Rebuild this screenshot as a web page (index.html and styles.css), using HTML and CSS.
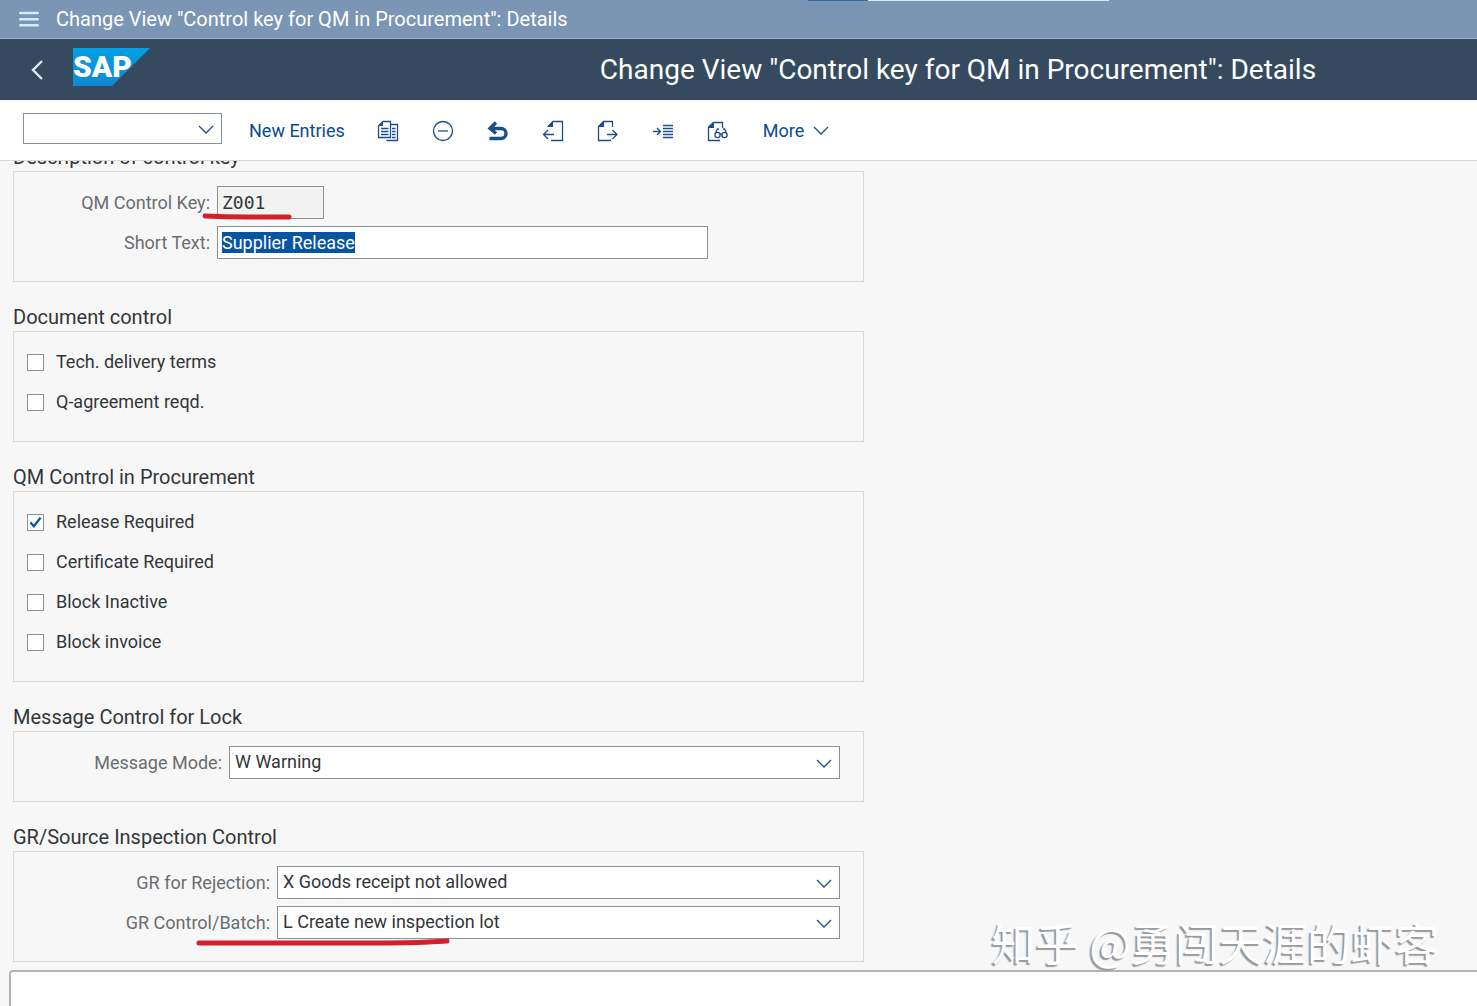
FILE: index.html
```html
<!DOCTYPE html>
<html lang="en">
<head>
    <meta charset="UTF-8">
    <meta name="viewport" content="width=device-width, initial-scale=1.0">
    <title>Change View "Control key for QM in Procurement": Details</title>
    <link rel="stylesheet" href="styles.css">
</head>
<body>
    <div class="menu-bar">
        <button class="menu-button" type="button" aria-label="Menu">
            <svg width="20" height="16" viewBox="0 0 20 16" stroke="#d5eafc" stroke-width="2.6" stroke-linecap="round">
                <path d="M1.3 2h17.4M1.3 8.2h17.4M1.3 14.2h17.4"/>
            </svg>
        </button>
        <span>Change View "Control key for QM in Procurement": Details</span>
        <div class="progress"><div class="progress-value"></div></div>
    </div>

    <header class="shell-header">
        <button class="back-button" type="button" aria-label="Back">
            <svg width="14" height="20" viewBox="0 0 14 20" fill="none" stroke="#d5eafc" stroke-width="2.4">
                <path d="M13 1L4 10l9 9"/>
            </svg>
        </button>
        <svg class="logo" width="77" height="38" viewBox="0 0 77 38">
            <defs>
                <linearGradient id="logo-fill" x1="0" y1="0" x2="0" y2="1">
                    <stop offset="0" stop-color="#009fe3"/>
                    <stop offset="1" stop-color="#1288d4"/>
                </linearGradient>
            </defs>
            <path d="M0 0h77L39 38H0z" fill="url(#logo-fill)"/>
            <text class="logo-text" x="0" y="29">SAP</text>
        </svg>
        <h1>Change View "Control key for QM in Procurement": Details</h1>
    </header>

    <div class="toolbar">
        <div class="select-box command">
            <select aria-label="Command"><option></option></select>
            <svg width="16" height="9" viewBox="0 0 16 9"><path d="M1 1l7 7 7-7"/></svg>
        </div>
        <button class="text-button" type="button">New Entries</button>
        <button class="icon-button" type="button" aria-label="Copy As">
            <svg width="22" height="22" viewBox="0 0 22 22">
                <path d="M6 1.5h7.500v16H1.500V6zM13.500 4.500H20.500v16H9.500M4 8.500h7.500M4 11.500h7.500M4 14.500h7.500M15 8.500h3.500M15 11.500h3.500M15 14.500h3.500M15 17.500h3.500"/>
                <path class="solid" d="M6 1v5H1z"/>
            </svg>
        </button>
        <button class="icon-button" type="button" aria-label="Delete">
            <svg width="22" height="22" viewBox="0 0 22 22">
                <circle cx="11" cy="11" r="9.500"/>
                <path d="M6 11h10"/>
            </svg>
        </button>
        <button class="icon-button" type="button" aria-label="Undo">
            <svg width="22" height="22" viewBox="0 0 22 22">
                <path class="thick" d="M2.500 18.500h11.500a5 5 0 0 0 0-10H4M9 2.500L3 8.500l6 5"/>
            </svg>
        </button>
        <button class="icon-button" type="button" aria-label="Previous Entry">
            <svg width="22" height="22" viewBox="0 0 22 22">
                <path d="M6.500 7V6L11 1.500h9.500v19H9M1.500 14.500H12M6 10l-4.500 4.500L6 19"/>
                <path class="solid" d="M11 1v6H5z"/>
            </svg>
        </button>
        <button class="icon-button" type="button" aria-label="Next Entry">
            <svg width="22" height="22" viewBox="0 0 22 22">
                <path d="M15.500 7V1.500H6.500L1.500 6.500v14H14M10 14.500h10M15.500 10l4.500 4.500-4.500 4.500"/>
                <path class="solid" d="M7 1v6H1z"/>
            </svg>
        </button>
        <button class="icon-button" type="button" aria-label="Other Entry">
            <svg width="22" height="22" viewBox="0 0 22 22">
                <path d="M1 11.500h7.500M5 8l3.500 3.500L5 15M11 5.500h10M11 8.500h10M11 11.500h10M11 14.500h10M11 17.500h10"/>
            </svg>
        </button>
        <button class="icon-button" type="button" aria-label="Display">
            <svg width="22" height="22" viewBox="0 0 22 22">
                <path d="M15.500 8V2.500H6.500L1.500 7v13.500H13"/>
                <path class="solid" d="M7 2v6H1z"/>
                <circle cx="10.500" cy="15" r="2.600"/>
                <circle cx="17.500" cy="15" r="2.600"/>
                <path d="M13 14.500q1-1 2 0M8.500 13l2-4h1.500M19.500 13l-2-4H16"/>
            </svg>
        </button>
        <button class="text-button more" type="button">More
            <svg width="16" height="9" viewBox="0 0 16 9"><path d="M1 1l7 7 7-7"/></svg>
        </button>
    </div>

    <main class="content">
        <section class="group">
            <h2>Description of control key</h2>
            <div class="panel">
                <div class="field">
                    <label for="control-key">QM Control Key:</label>
                    <input class="key-input" id="control-key" type="text" value="Z001" readonly>
                </div>
                <div class="field">
                    <label for="short-text">Short Text:</label>
                    <input class="text-input" id="short-text" type="text" value="Supplier Release">
                </div>
                <svg class="mark mark-key" width="90" height="8" viewBox="0 0 90 8"><path d="M3 4q20 1 42 1t42 0"/></svg>
            </div>
        </section>

        <section class="group">
            <h2>Document control</h2>
            <div class="panel">
                <label class="check"><input type="checkbox"><span>Tech. delivery terms</span></label>
                <label class="check"><input type="checkbox"><span>Q-agreement reqd.</span></label>
            </div>
        </section>

        <section class="group">
            <h2>QM Control in Procurement</h2>
            <div class="panel">
                <label class="check"><input type="checkbox" checked><span>Release Required</span></label>
                <label class="check"><input type="checkbox"><span>Certificate Required</span></label>
                <label class="check"><input type="checkbox"><span>Block Inactive</span></label>
                <label class="check"><input type="checkbox"><span>Block invoice</span></label>
            </div>
        </section>

        <section class="group">
            <h2>Message Control for Lock</h2>
            <div class="panel">
                <div class="field field-mode">
                    <label for="message-mode">Message Mode:</label>
                    <div class="select-box">
                        <select id="message-mode"><option>W Warning</option></select>
                        <svg width="16" height="9" viewBox="0 0 16 9"><path d="M1 1l7 7 7-7"/></svg>
                    </div>
                </div>
            </div>
        </section>

        <section class="group">
            <h2>GR/Source Inspection Control</h2>
            <div class="panel">
                <div class="field field-gr">
                    <label for="gr-rejection">GR for Rejection:</label>
                    <div class="select-box">
                        <select id="gr-rejection"><option>X Goods receipt not allowed</option></select>
                        <svg width="16" height="9" viewBox="0 0 16 9"><path d="M1 1l7 7 7-7"/></svg>
                    </div>
                </div>
                <div class="field field-gr">
                    <label for="gr-batch">GR Control/Batch:</label>
                    <div class="select-box">
                        <select id="gr-batch"><option>L Create new inspection lot</option></select>
                        <svg width="16" height="9" viewBox="0 0 16 9"><path d="M1 1l7 7 7-7"/></svg>
                    </div>
                </div>
                <svg class="mark mark-batch" width="254" height="8" viewBox="0 0 254 8"><path d="M3 5h190q30 0 58-2"/></svg>
            </div>
        </section>
    </main>

    <footer class="message-area"></footer>
    <div class="watermark" lang="zh">知乎 @勇闯天涯的虾客</div>

    <script>
        const shortText = document.getElementById('short-text');
        shortText.focus();
        shortText.select();
    </script>
</body>
</html>
```
FILE: styles.css
```css
* {
    box-sizing: border-box;
}

body {
    display: flex;
    flex-direction: column;
    height: 100vh;
    margin: 0;
    overflow: hidden;
    background: #f7f7f7;
    color: #32363a;
    font-family: Roboto, "Liberation Sans", sans-serif;
    font-size: 18px;
}

button,
input,
select {
    margin: 0;
    font: inherit;
    color: inherit;
}

button {
    padding: 0;
    border: 0;
    background: none;
    cursor: pointer;
}

h1,
h2 {
    margin: 0;
    font-weight: 400;
}

.menu-bar {
    position: relative;
    display: flex;
    flex: none;
    align-items: center;
    gap: 17px;
    height: 39px;
    padding-left: 19px;
    background: #7a96b4;
    border-bottom: 1px solid #9db3ca;
    color: #fff;
    font-size: 20px;
}

.menu-button,
.back-button {
    display: flex;
}

.progress {
    position: absolute;
    top: 0;
    left: 808px;
    width: 301px;
    height: 1px;
    background: #d5eafc;
}

.progress-value {
    width: 20%;
    height: 1px;
    background: #2a6fb0;
}

.shell-header {
    display: flex;
    flex: none;
    align-items: center;
    height: 61px;
    padding-left: 29px;
    background: #354a5f;
    color: #fff;
}

.logo {
    flex: none;
    margin: 0 0 5px 30px;
}

.logo-text {
    fill: #fff;
    font-size: 30px;
    font-weight: 900;
}

.shell-header h1 {
    flex: 1;
    padding-left: 289px;
    font-size: 28px;
    text-align: center;
    white-space: nowrap;
}

.toolbar {
    display: flex;
    flex: none;
    align-items: center;
    height: 61px;
    padding: 0 23px;
    background: #fff;
    border-bottom: 1px solid #d9d9d9;
    color: #0a4b8c;
}

.text-button {
    margin: 0 16px 0 27px;
}

.icon-button {
    display: flex;
    justify-content: center;
    width: 55px;
    padding-top: 1px;
}

.icon-button svg {
    fill: none;
    stroke: #1b4f8a;
    stroke-width: 1.3;
}

.icon-button .solid {
    fill: #1b4f8a;
    stroke: none;
}

.icon-button .thick {
    stroke-width: 3.4;
}

.more {
    display: flex;
    align-items: center;
    gap: 9px;
    margin-left: 17px;
}

.more svg,
.select-box svg {
    fill: none;
    stroke: #1b4f8a;
    stroke-width: 1.3;
}

.select-box {
    display: grid;
    flex: 1;
    align-items: center;
}

.select-box select {
    grid-area: 1 / 1;
    width: 100%;
    height: 33px;
    padding: 0 32px 2px 5px;
    appearance: none;
    background: #fff;
    border: 1px solid #89919a;
    border-radius: 0;
}

.select-box svg {
    grid-area: 1 / 1;
    justify-self: end;
    margin: 2px 8px 0 0;
    pointer-events: none;
}

.command {
    flex: 0 0 199px;
    margin-bottom: 3px;
}

.command select {
    height: 31px;
}

.content {
    flex: 1;
    min-height: 0;
    padding: 0 13px;
    overflow: hidden;
}

.group {
    max-width: 851px;
    margin-bottom: 21px;
}

/* first heading is half scrolled under the toolbar */
.group:first-child {
    margin-top: -18px;
}

.group h2 {
    font-size: 20px;
    line-height: 28px;
}

.panel {
    position: relative;
    display: flex;
    flex-direction: column;
    gap: 7px;
    padding: 14px 23px 22px 0;
    border: 1px solid #d9d9d9;
}

.field {
    display: flex;
    align-items: center;
    gap: 7px;
}

.field label {
    flex: none;
    width: 196px;
    color: #6a6d70;
    text-align: right;
}

.field-mode label {
    width: 208px;
}

.field-gr label {
    width: 256px;
}

.field input {
    height: 33px;
    padding: 0 4px;
    background: #fff;
    border: 1px solid #89919a;
    border-radius: 0;
    outline: none;
}

.field .key-input {
    width: 107px;
    background: #f2f2f2;
    font-family: "DejaVu Sans Mono", monospace;
}

.field .text-input {
    width: 491px;
}

.text-input::selection {
    background: #0854a0;
    color: #fff;
}

.check {
    display: flex;
    align-items: center;
    gap: 12px;
    height: 33px;
    padding-left: 13px;
}

.check span {
    padding-bottom: 2px;
}

.check input {
    display: grid;
    place-items: center;
    width: 17px;
    height: 17px;
    appearance: none;
    background: #fff;
    border: 1px solid #89919a;
}

.check input:checked::before {
    content: "";
    width: 12px;
    height: 11px;
    background: #0854a0;
    clip-path: polygon(0 56%, 14% 42%, 36% 68%, 84% 0, 100% 12%, 38% 100%);
}

.mark {
    position: absolute;
    fill: none;
    stroke: #d4202a;
    stroke-width: 5;
    stroke-linecap: round;
}

.mark-key {
    top: 40px;
    left: 188px;
}

.mark-batch {
    top: 86px;
    left: 182px;
}

.message-area {
    flex: none;
    height: 36px;
    margin-left: 9px;
    background: #fff;
    border: 2px solid #b4b4b4;
    border-width: 2px 0 0 2px;
    border-top-left-radius: 4px;
}

.watermark {
    position: absolute;
    right: 38px;
    bottom: 34px;
    color: #fff;
    font-family: "Noto Sans CJK SC", sans-serif;
    font-size: 44px;
    line-height: 60px;
    text-shadow: -2px 2px 1px #999;
    white-space: nowrap;
}
```
